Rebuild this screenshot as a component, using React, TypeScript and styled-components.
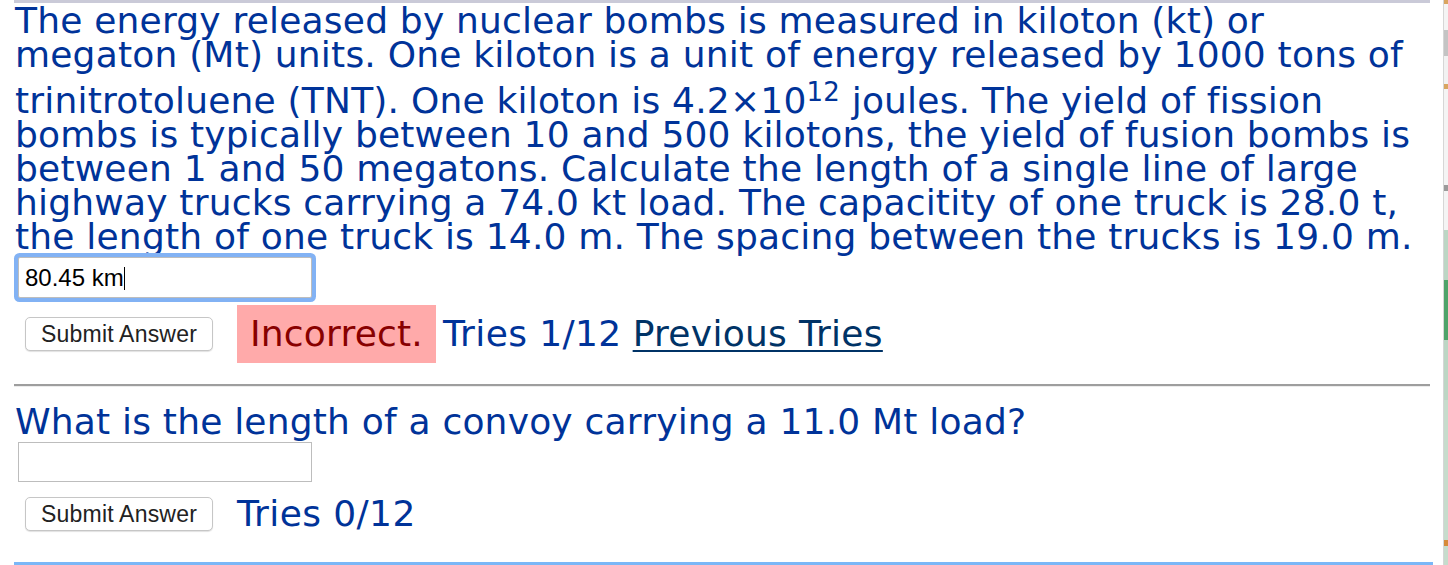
import styled, { createGlobalStyle } from 'styled-components';

const GlobalStyle = createGlobalStyle`
  html, body {
    margin: 0;
    padding: 0;
    background: #ffffff;
  }
  body {
    font-family: "DejaVu Sans", Verdana, sans-serif;
    overflow: hidden;
  }
`;

interface AnswerRowProps {
  value?: string;
  focused?: boolean;
  tries: number;
  maxTries: number;
  incorrect?: boolean;
}

const AnswerBlock = ({ value, focused, tries, maxTries, incorrect }: AnswerRowProps) => (
  <>
    <InputWrap>
      <AnswerInput type="text" defaultValue={value} $focused={focused} readOnly />
      {focused && <Caret />}
    </InputWrap>
    <SubmitRow>
      <SubmitButton type="button">Submit Answer</SubmitButton>
      {incorrect && <Verdict>Incorrect.</Verdict>}
      <TriesText>
        Tries {tries}/{maxTries}
        {incorrect && <PreviousLink href="#">Previous Tries</PreviousLink>}
      </TriesText>
    </SubmitRow>
  </>
);

// narrow sliver of the neighbouring window at the right edge
const sideBands = [
  { h: 4, c: '#d9a560' },
  { h: 26, c: '#f4f4f4' },
  { h: 26, c: '#c4c4c4' },
  { h: 28, c: '#f2f2f2' },
  { h: 5, c: '#d9a560' },
  { h: 96, c: '#f4f4f4' },
  { h: 6, c: '#9a9a9a' },
  { h: 39, c: '#f4f4f4' },
  { h: 50, c: '#bcd6c4' },
  { h: 60, c: '#4ea36a' },
  { h: 60, c: '#bcd6c4' },
  { h: 140, c: '#c6dccc' },
  { h: 6, c: '#d68a3a' },
  { h: 19, c: '#c6dccc' },
];

export default function App() {
  return (
    <>
      <GlobalStyle />
      <Page>
        <Main>
          <Problem>
            <QuestionText>
              The energy released by nuclear bombs is measured in kiloton (kt) or
              <br />
              megaton (Mt) units. One kiloton is a unit of energy released by 1000 tons of
              <br />
              trinitrotoluene (TNT). One kiloton is 4.2×10<sup>12</sup> joules. The yield of fission
              <br />
              bombs is typically between 10 and 500 kilotons, the yield of fusion bombs is
              <br />
              between 1 and 50 megatons. Calculate the length of a single line of large
              <br />
              highway trucks carrying a 74.0 kt load. The capacitity of one truck is 28.0 t,
              <br />
              the length of one truck is 14.0 m. The spacing between the trucks is 19.0 m.
            </QuestionText>
            <AnswerBlock value="80.45 km" focused tries={1} maxTries={12} incorrect />
          </Problem>
          <Divider />
          <Problem>
            <QuestionText $gap={18}>
              What is the length of a convoy carrying a 11.0 Mt load?
            </QuestionText>
            <AnswerBlock tries={0} maxTries={12} />
          </Problem>
          <NextPart />
        </Main>
        <SideStrip>
          {sideBands.map((b, i) => (
            <SideBand key={i} style={{ height: b.h, background: b.c }} />
          ))}
        </SideStrip>
      </Page>
    </>
  );
}

const Page = styled.div`
  display: flex;
  width: 1448px;
  height: 565px;
  overflow: hidden;
`;

const Main = styled.div`
  width: 1416px;
  margin-left: 14px;
  margin-right: 13px;
  border-top: 3px solid #cacad8;
`;

const Problem = styled.section`
  display: flex;
  flex-direction: column;
  align-items: flex-start;
`;

const QuestionText = styled.div<{ $gap?: number }>`
  margin-top: ${(p) => p.$gap ?? 1}px;
  padding-left: 1px;
  font-size: 36px;
  line-height: 34px;
  letter-spacing: 0.2px;
  white-space: nowrap;
  color: #003399;

  sup {
    font-size: 26px;
    line-height: 40px;
    vertical-align: 12px;
  }
`;

const InputWrap = styled.div`
  position: relative;
  margin: 3px 0 0 4px;
`;

const AnswerInput = styled.input<{ $focused?: boolean }>`
  display: block;
  box-sizing: border-box;
  width: 294px;
  height: ${(p) => (p.$focused ? '41px' : '40px')};
  padding: 0 6px;
  border: 1px solid #bdbdbd;
  border-radius: ${(p) => (p.$focused ? '2px' : '0')};
  box-shadow: ${(p) => (p.$focused ? '0 0 0 4px #82b2f4' : 'none')};
  outline: none;
  font-family: 'Liberation Sans', Arial, sans-serif;
  font-size: 24px;
  color: #000;
  background: #fff;
`;

const Caret = styled.span`
  position: absolute;
  left: 106px;
  top: 10px;
  width: 1px;
  height: 23px;
  background: #000;
`;

const SubmitRow = styled.div`
  display: flex;
  align-items: center;
  min-height: 50px;
  margin-top: 7px;
  padding-left: 11px;
`;

const SubmitButton = styled.button`
  box-sizing: border-box;
  width: 188px;
  height: 34px;
  margin-right: 24px;
  padding: 0;
  border: 1px solid #c6c6c6;
  border-radius: 5px;
  background: #ffffff;
  box-shadow: 0 1px 1px rgba(0, 0, 0, 0.12);
  font-family: 'Liberation Sans', Arial, sans-serif;
  font-size: 23px;
  letter-spacing: 0.2px;
  color: #222;
`;

const Verdict = styled.span`
  padding: 10px 13px;
  margin-right: 7px;
  background: #ffaaaa;
  color: #880000;
  font-size: 36px;
  line-height: 38px;
  letter-spacing: 0.2px;
`;

const TriesText = styled.span`
  font-size: 36px;
  line-height: 38px;
  letter-spacing: 0.4px;
  color: #003399;
`;

const PreviousLink = styled.a`
  margin-left: 11px;
  letter-spacing: 0.3px;
  color: #003366;
  text-decoration: underline;
  text-underline-offset: 4px;
  text-decoration-thickness: 2px;
`;

const Divider = styled.hr`
  width: 100%;
  margin: 21px 0 0 0;
  border: none;
  border-top: 2px solid #9e9e9e;
  border-bottom: 1px solid #ececec;
`;

const NextPart = styled.div`
  margin-top: 23px;
  width: 1419px;
  border-top: 3px solid #7ab7f7;
`;

const SideStrip = styled.div`
  display: flex;
  flex-direction: column;
  width: 5px;
  border-left: 1px solid #d6d6d6;
`;

const SideBand = styled.div`
  flex-shrink: 0;
`;
